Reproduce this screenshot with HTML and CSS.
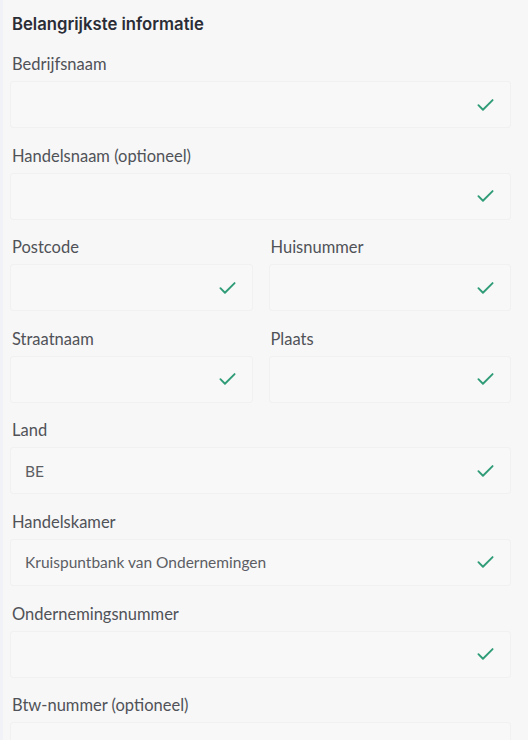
FILE: index.html
```html
<!DOCTYPE html>
<html lang="nl">

<head>
  <meta charset="UTF-8">
  <meta name="viewport" content="width=device-width, initial-scale=1.0">
  <title>Belangrijkste informatie</title>
  <link rel="stylesheet" href="styles.css">
</head>

<body>
  <div id="info">
    <h3>Belangrijkste informatie</h3>
    <form id="infoForm">
      <div class="field">
        <label for="bedrijfsnaam">Bedrijfsnaam</label>
        <div class="box">
          <input type="text" id="bedrijfsnaam">
          <svg class="check" viewBox="0 0 18 14"><path d="M1.5 7.2 6.3 12 16.5 1.8"/></svg>
        </div>
      </div>
      <div class="field">
        <label for="handelsnaam">Handelsnaam (optioneel)</label>
        <div class="box">
          <input type="text" id="handelsnaam">
          <svg class="check" viewBox="0 0 18 14"><path d="M1.5 7.2 6.3 12 16.5 1.8"/></svg>
        </div>
      </div>
      <div class="row">
        <div class="field">
          <label for="postcode">Postcode</label>
          <div class="box">
            <input type="text" id="postcode">
            <svg class="check" viewBox="0 0 18 14"><path d="M1.5 7.2 6.3 12 16.5 1.8"/></svg>
          </div>
        </div>
        <div class="field">
          <label for="huisnummer">Huisnummer</label>
          <div class="box">
            <input type="text" id="huisnummer">
            <svg class="check" viewBox="0 0 18 14"><path d="M1.5 7.2 6.3 12 16.5 1.8"/></svg>
          </div>
        </div>
      </div>
      <div class="row">
        <div class="field">
          <label for="straatnaam">Straatnaam</label>
          <div class="box">
            <input type="text" id="straatnaam">
            <svg class="check" viewBox="0 0 18 14"><path d="M1.5 7.2 6.3 12 16.5 1.8"/></svg>
          </div>
        </div>
        <div class="field">
          <label for="plaats">Plaats</label>
          <div class="box">
            <input type="text" id="plaats">
            <svg class="check" viewBox="0 0 18 14"><path d="M1.5 7.2 6.3 12 16.5 1.8"/></svg>
          </div>
        </div>
      </div>
      <div class="field">
        <label for="land">Land</label>
        <div class="box">
          <input type="text" id="land" value="BE">
          <svg class="check" viewBox="0 0 18 14"><path d="M1.5 7.2 6.3 12 16.5 1.8"/></svg>
        </div>
      </div>
      <div class="field">
        <label for="handelskamer">Handelskamer</label>
        <div class="box">
          <input type="text" id="handelskamer" value="Kruispuntbank van Ondernemingen">
          <svg class="check" viewBox="0 0 18 14"><path d="M1.5 7.2 6.3 12 16.5 1.8"/></svg>
        </div>
      </div>
      <div class="field">
        <label for="ondernemingsnummer">Ondernemingsnummer</label>
        <div class="box">
          <input type="text" id="ondernemingsnummer">
          <svg class="check" viewBox="0 0 18 14"><path d="M1.5 7.2 6.3 12 16.5 1.8"/></svg>
        </div>
      </div>
      <div class="field">
        <label for="btw">Btw-nummer (optioneel)</label>
        <div class="box">
          <input type="text" id="btw">
        </div>
      </div>
    </form>
  </div>
</body>
</html>
```

FILE: styles.css
```css
body {
  margin: 0;
  background-color: #f7f7f7;
  border-left: 3px solid #f1f2f8;
  font-family: Lato, "Open Sans", sans-serif;
}
#info {
  padding: 12px 17px 0 7px;
}
h3 {
  margin: 0 0 16px 2px;
  font-family: Inter, sans-serif;
  font-size: 16.7px;
  font-weight: 600;
  line-height: 24px;
  color: #2a2d36;
}
.row {
  display: grid;
  grid-template-columns: minmax(0, 1fr) minmax(0, 1fr);
  gap: 16px;
}
.field {
  min-width: 0;
  margin-bottom: 15.6px;
}
.field label {
  display: block;
  margin: 0 0 5px 2px;
  font-size: 16.5px;
  line-height: 24px;
  color: #505258;
}
.box {
  display: flex;
  align-items: center;
  height: 47px;
  box-sizing: border-box;
  border: 1px solid #f1f1f1;
  border-radius: 3px;
  background-color: #f8f8f8;
}
.box input {
  flex: 1;
  min-width: 0;
  height: 100%;
  padding: 0 14px;
  border: none;
  background: transparent;
  font-family: Lato, "Open Sans", sans-serif;
  font-size: 15.5px;
  color: #5c5e64;
  outline: none;
}
.check {
  width: 17px;
  height: 14px;
  margin-right: 16px;
  fill: none;
  stroke: #2f9c77;
  stroke-width: 2;
  stroke-linecap: round;
  stroke-linejoin: round;
}
```
